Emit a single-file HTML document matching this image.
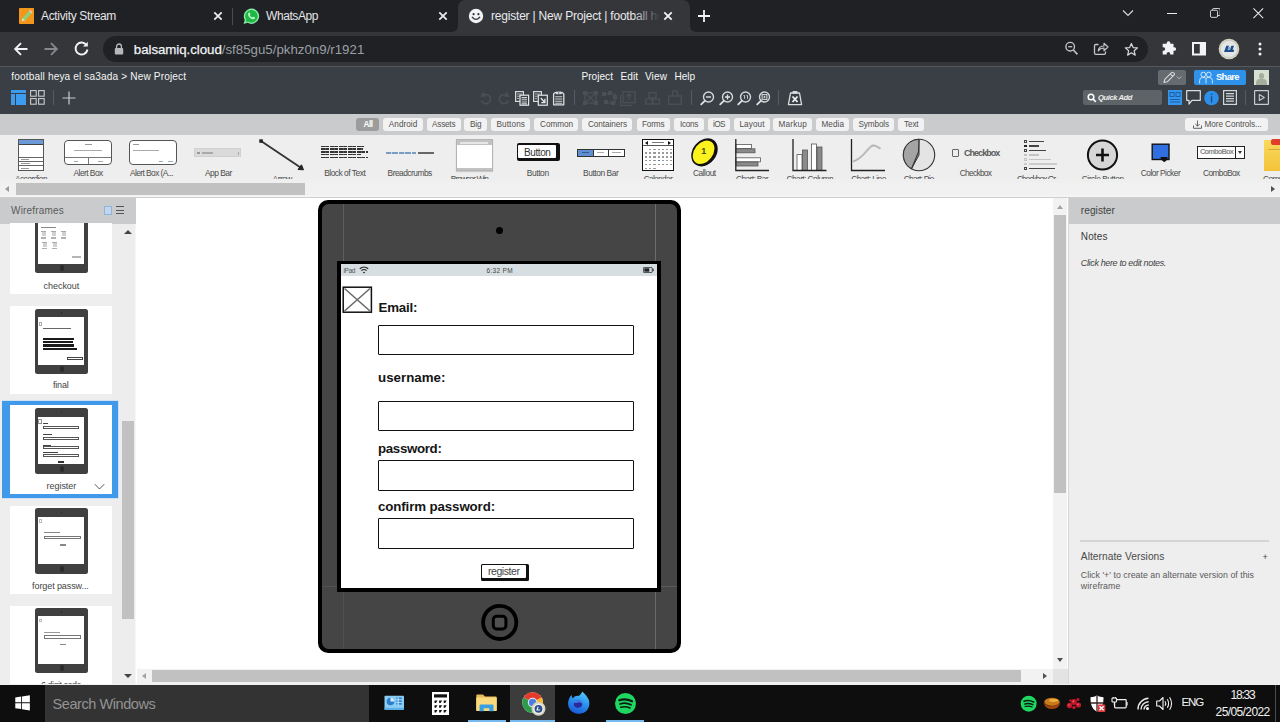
<!DOCTYPE html>
<html>
<head>
<meta charset="utf-8">
<title>register</title>
<style>
*{box-sizing:border-box;margin:0;padding:0}
html,body{width:1280px;height:722px;overflow:hidden;background:#fff;font-family:"Liberation Sans",sans-serif;}
.a{position:absolute}
.t{position:absolute;white-space:nowrap;line-height:1}
#tabbar{left:0;top:0;width:1280px;height:32px;background:#202124}
#addr{left:0;top:32px;width:1280px;height:34px;background:#35363a}
#sep{left:0;top:66px;width:1280px;height:1px;background:#55585c}
#apphdr{left:0;top:67px;width:1280px;height:46.500px;background:#393f44}
#catbar{left:0;top:113.500px;width:1280px;height:21.500px;background:#c9cbcc}
#lib{left:0;top:135px;width:1280px;height:48px;background:#eeeeee}
#libscroll{left:0;top:183px;width:1280px;height:12px;background:#f1f1f1}
#leftp{left:0;top:198px;width:136px;height:487px;background:#eeeeee}
#canvas{left:136px;top:198px;width:932px;height:486px;background:#fff}
#rightp{left:1069px;top:198px;width:211px;height:486px;background:#eeeeee}
#taskbar{left:0;top:684.500px;width:1280px;height:37.500px;background:#0e0e0f}
</style>
</head>
<body>
<!-- CHROME TABBAR -->
<div class="a" id="tabbar"></div>
<!-- tab1 favicon -->
<svg class="a" style="left:19px;top:8px" width="15.300" height="16" viewBox="0 0 16 16" preserveAspectRatio="none"><rect width="16" height="16" rx="1" fill="#f2971c"/><path d="M2.800 13.200 L3.600 10 L10.400 3 L13 5.600 L6.200 12.400 Z" fill="#8fcf78"/><path d="M2.800 13.200 L3.600 10 L6.200 12.400 Z" fill="#f6dcae"/><path d="M10.400 3 L11.600 1.800 L14.200 4.400 L13 5.600 Z" fill="#f5c3b8"/></svg>
<div class="t" style="left:41px;top:10.28px;font-size:12px;color:#e4e5e8;letter-spacing:-0.334px;">Activity Stream</div>
<svg class="a" style="left:213px;top:11px" width="10" height="10" viewBox="0 0 10 10"><path d="M1.3 1.3 L8.7 8.7 M8.7 1.3 L1.3 8.7" stroke="#e8eaed" stroke-width="1.800" fill="none"/></svg>
<div class="a" style="left:232px;top:8px;width:1px;height:17px;background:#4a4c50"></div>
<!-- tab2 whatsapp -->
<svg class="a" style="left:243.300px;top:7.700px" width="16.500" height="16.500" viewBox="0 0 17 17"><path d="M8.600 0.600 a7.900 7.900 0 1 1 -3.900 14.700 L0.600 16.400 L1.800 12.400 A7.900 7.900 0 0 1 8.600 0.600 Z" fill="#86e8a2"/><path d="M8.600 2 a6.500 6.500 0 1 1 -3.500 12 L2.700 14.500 L3.400 12.100 A6.500 6.500 0 0 1 8.600 2 Z" fill="#1fb845"/><path d="M5.900 4.900 c0.500 -0.500 1 -0.300 1.200 0.100 l0.500 1.200 c0.100 0.300 0 0.500 -0.200 0.700 l-0.400 0.500 c0.600 1.100 1.500 1.900 2.600 2.500 l0.600 -0.700 c0.200 -0.200 0.500 -0.300 0.700 -0.200 l1.200 0.600 c0.400 0.200 0.400 0.600 0.200 1 c-0.400 0.800 -1.300 1.200 -2.200 1 c-2.500 -0.600 -4.500 -2.600 -5 -5 c-0.100 -0.700 0.200 -1.300 0.800 -1.700 Z" fill="#b9f5c8"/></svg>
<div class="t" style="left:266px;top:10.28px;font-size:12px;color:#e4e5e8;letter-spacing:-0.420px;">WhatsApp</div>
<svg class="a" style="left:438px;top:11px" width="10" height="10" viewBox="0 0 10 10"><path d="M1.3 1.3 L8.7 8.7 M8.7 1.3 L1.3 8.7" stroke="#e8eaed" stroke-width="1.800" fill="none"/></svg>
<!-- active tab -->
<svg class="a" style="left:450px;top:0px" width="248" height="32" viewBox="0 0 248 32"><path d="M0 32 C6 32 8 30 8 24 L8 8 C8 3 11 0 16 0 L232 0 C237 0 240 3 240 8 L240 24 C240 30 242 32 248 32 Z" fill="#35363a"/></svg>
<svg class="a" style="left:468px;top:8px" width="16" height="16" viewBox="0 0 16 16"><circle cx="8" cy="8" r="7.2" fill="#f1f3f4"/><circle cx="5.6" cy="6.2" r="1.1" fill="#35363a"/><circle cx="10.4" cy="6.2" r="1.1" fill="#35363a"/><path d="M4.3 9.300 Q8 13.400 11.700 9.300" stroke="#35363a" stroke-width="1.300" fill="none" stroke-linecap="round"/></svg>
<div class="a" style="left:491px;top:6px;width:168px;height:20px;overflow:hidden"><div class="t" style="left:0;top:4px;font-size:12px;color:#e8eaed;letter-spacing:-0.2px">register | New Project | football heya</div></div>
<div class="a" style="left:632px;top:6px;width:28px;height:20px;background:linear-gradient(90deg,rgba(53,54,58,0),#35363a)"></div>
<svg class="a" style="left:663px;top:11px" width="10" height="10" viewBox="0 0 10 10"><path d="M1.3 1.3 L8.7 8.7 M8.7 1.3 L1.3 8.7" stroke="#f1f3f4" stroke-width="1.800" fill="none"/></svg>
<svg class="a" style="left:697px;top:9px" width="14" height="14" viewBox="0 0 14 14"><path d="M7 1 V13 M1 7 H13" stroke="#f1f3f4" stroke-width="1.800" fill="none"/></svg>
<!-- window controls -->
<svg class="a" style="left:1122px;top:9px" width="12" height="8" viewBox="0 0 12 8"><path d="M1 1.500 L6 6.500 L11 1.500" stroke="#d5d6d8" stroke-width="1.200" fill="none"/></svg>
<div class="a" style="left:1167px;top:13.300px;width:9.800px;height:1px;background:#e8eaed"></div>
<svg class="a" style="left:1209.700px;top:8px" width="10.700" height="10.700" viewBox="0 0 12 12"><rect x="0.5" y="2.500" width="8" height="8" rx="1.500" stroke="#e8eaed" fill="none"/><path d="M3 2.500 V1.500 a1 1 0 0 1 1 -1 H10 a1.500 1.500 0 0 1 1.500 1.500 V7.500 a1 1 0 0 1 -1 1 H8.500" stroke="#e8eaed" fill="none"/></svg>
<svg class="a" style="left:1253.200px;top:8.200px" width="10.600" height="10.600" viewBox="0 0 12 12"><path d="M0.500 0.500 L11.500 11.500 M11.500 0.500 L0.500 11.500" stroke="#e8eaed" stroke-width="1.200" fill="none"/></svg>
<!-- ADDRESS BAR -->
<div class="a" id="addr"></div>
<svg class="a" style="left:13px;top:41px" width="16" height="16" viewBox="0 0 16 16"><path d="M14.500 8 H2.500 M8 2.200 L2.200 8 L8 13.800" stroke="#f1f3f4" stroke-width="1.900" fill="none"/></svg>
<svg class="a" style="left:43px;top:41px" width="16" height="16" viewBox="0 0 16 16"><path d="M1.500 8 H13.500 M8 2.200 L13.800 8 L8 13.800" stroke="#85888c" stroke-width="1.900" fill="none"/></svg>
<svg class="a" style="left:73px;top:40px" width="17" height="17" viewBox="0 0 17 17"><path d="M13.600 5.200 A6 6 0 1 0 14.500 9.500" stroke="#f1f3f4" stroke-width="1.900" fill="none"/><path d="M14.800 1.800 V6.600 H10 Z" fill="#f1f3f4"/></svg>
<div class="a" style="left:102.500px;top:36px;width:1045px;height:26px;border-radius:13px;background:#202124"></div>
<svg class="a" style="left:114px;top:43px" width="10" height="12" viewBox="0 0 10 12"><rect x="0.800" y="5" width="8.400" height="6.500" rx="1" fill="#b5b7ba"/><path d="M2.600 5.200 V3.400 a2.400 2.400 0 0 1 4.800 0 V5.200" stroke="#b5b7ba" stroke-width="1.300" fill="none"/></svg>
<div class="t" style="left:133.8px;top:42.95px;font-size:13.3px;color:#f1f3f4;letter-spacing:-0.050px;-webkit-text-stroke:0.25px #f1f3f4;">balsamiq.cloud</div><div class="t" style="left:221.8px;top:42.95px;font-size:13.3px;color:#9aa0a6;letter-spacing:-0.009px;">/sf85gu5/pkhz0n9/r1921</div>
<!-- right-side omnibox icons -->
<svg class="a" style="left:1063.500px;top:41px" width="15" height="15" viewBox="0 0 15 15"><circle cx="6.200" cy="5.700" r="4.300" stroke="#bfc2c5" stroke-width="1.400" fill="none"/><path d="M9.400 9 L13.400 13.400" stroke="#bfc2c5" stroke-width="1.600"/><path d="M4.200 5.700 H8.200" stroke="#bfc2c5" stroke-width="1.300"/></svg>
<svg class="a" style="left:1093px;top:41px" width="16" height="15" viewBox="0 0 16 15"><path d="M5.500 3.500 H2.800 a1.300 1.300 0 0 0 -1.300 1.300 V12 a1.300 1.300 0 0 0 1.300 1.300 H11.200 a1.300 1.300 0 0 0 1.300 -1.300 V10.500" stroke="#c4c7ca" stroke-width="1.300" fill="none"/><path d="M5.200 10 C5.500 6.800 8 5 11 5 V2.300 L15 6 L11 9.700 V7 C8.500 7 6.500 8 5.200 10 Z" stroke="#c4c7ca" stroke-width="1.200" fill="none" stroke-linejoin="round"/></svg>
<svg class="a" style="left:1124px;top:41.600px" width="14.800" height="14.800" viewBox="0 0 16 16"><path d="M8 1.600 L9.900 6 L14.600 6.400 L11 9.500 L12.100 14.200 L8 11.700 L3.900 14.200 L5 9.500 L1.400 6.400 L6.100 6 Z" stroke="#d5d7da" stroke-width="1.300" fill="none" stroke-linejoin="round"/></svg>
<svg class="a" style="left:1159.700px;top:40.300px" width="17.300" height="17.300" viewBox="0 0 16 16"><path d="M6.200 2.800 a1.700 1.700 0 0 1 3.400 0 V3.500 H12.500 V6.600 H13.200 a1.700 1.700 0 0 1 0 3.400 H12.500 V13.500 H9.400 V12.800 a1.600 1.600 0 0 0 -3.200 0 V13.500 H2.500 V10 H3.200 a1.600 1.600 0 0 0 0 -3.200 H2.500 V3.500 H6.200 Z" fill="#f1f3f4"/></svg>
<svg class="a" style="left:1192px;top:42px" width="14" height="13.500" viewBox="0 0 14 13.500"><rect x="1" y="1" width="12" height="11.500" stroke="#f1f3f4" stroke-width="2" fill="none"/><rect x="7.800" y="1" width="5.200" height="11.500" fill="#f1f3f4"/></svg>
<svg class="a" style="left:1218.200px;top:37.700px" width="22" height="22" viewBox="0 0 22 22"><circle cx="11" cy="11" r="10.300" fill="#d6d4c0"/><circle cx="11" cy="11" r="8.600" fill="#e3e6e2"/><circle cx="11" cy="11" r="8.600" fill="none" stroke="#b9c0c4" stroke-width="0.600"/><path d="M6 14 L8.300 7.800 H11 L9.600 11.800 H12 L13.400 7.800 H16 L14.600 11.800 H16.300 L15.600 14 Z" fill="#1d4d8c"/><path d="M9.500 10.500 L12.500 8.500 L11.500 11.500 Z" fill="#5d9ad8"/></svg>
<svg class="a" style="left:1257.700px;top:42.200px" width="4" height="14" viewBox="0 0 4 14"><circle cx="2" cy="2" r="1.500" fill="#f1f3f4"/><circle cx="2" cy="7" r="1.500" fill="#f1f3f4"/><circle cx="2" cy="12" r="1.500" fill="#f1f3f4"/></svg>
<div class="a" id="sep"></div>
<!-- APP HEADER -->
<div class="a" id="apphdr"></div>
<div class="t" style="left:11.3px;top:71.74px;font-size:10.1px;color:#f4f4f4;letter-spacing:0.139px;">football heya el sa3ada &gt; New Project</div>
<div class="t" style="left:581.5px;top:71.54px;font-size:10.1px;color:#f6f6f6;letter-spacing:0.011px;">Project</div>
<div class="t" style="left:620.5px;top:71.54px;font-size:10.1px;color:#f6f6f6;letter-spacing:0.023px;">Edit</div>
<div class="t" style="left:645px;top:71.54px;font-size:10.1px;color:#f6f6f6;letter-spacing:0.074px;">View</div>
<div class="t" style="left:674.5px;top:71.54px;font-size:10.1px;color:#f6f6f6;letter-spacing:-0.066px;">Help</div>
<!-- left toolbar -->
<svg class="a" style="left:11px;top:90px" width="15" height="15" viewBox="0 0 15 15"><rect x="0" y="0" width="15" height="3" fill="#3d9cf0"/><rect x="0" y="4" width="4" height="11" fill="#3d9cf0"/><rect x="5" y="4" width="10" height="11" fill="#3d9cf0"/></svg>
<svg class="a" style="left:30px;top:90px" width="15" height="15" viewBox="0 0 15 15"><g stroke="#c9cbcd" stroke-width="1.100" fill="none"><rect x="0.600" y="0.600" width="5.600" height="5.600"/><rect x="8.600" y="0.600" width="5.600" height="5.600"/><rect x="0.600" y="8.600" width="5.600" height="5.600"/><rect x="8.600" y="8.600" width="5.600" height="5.600"/></g></svg>
<div class="a" style="left:53px;top:90px;width:1px;height:15px;background:#565b60"></div>
<svg class="a" style="left:62px;top:91px" width="14" height="14" viewBox="0 0 14 14"><path d="M7 0.500 V13.500 M0.500 7 H13.500" stroke="#c9cbcd" stroke-width="1.200"/></svg>
<!-- center toolbar -->
<svg class="a" style="left:480px;top:91px" width="12" height="14" viewBox="0 0 12 14"><path d="M2.500 5 A4.600 4.600 0 1 1 1.500 9.500" stroke="#4a5056" stroke-width="1.600" fill="none"/><path d="M0.300 5.800 L5.800 5.800 L3.500 0.500 Z" fill="#4a5056"/></svg>
<svg class="a" style="left:498px;top:91px" width="12" height="14" viewBox="0 0 12 14"><path d="M9.500 5 A4.600 4.600 0 1 0 10.500 9.500" stroke="#4a5056" stroke-width="1.600" fill="none"/><path d="M11.700 5.800 L6.200 5.800 L8.500 0.500 Z" fill="#4a5056"/></svg>
<svg class="a" style="left:515px;top:91px" width="15" height="15" viewBox="0 0 15 15"><rect x="0.600" y="0.600" width="7.800" height="9.800" stroke="#d6d8da" stroke-width="1.200" fill="#393f44"/><path d="M1.800 3 H7.200 M1.800 5.200 H7.200 M1.800 7.400 H4" stroke="#aeb1b4" stroke-width="1"/><rect x="5" y="4.200" width="8.600" height="10" stroke="#e6e7e8" stroke-width="1.200" fill="#393f44"/><path d="M6.600 6.600 H12 M6.600 8.800 H12 M6.600 11 H12 M6.600 12.900 H12" stroke="#d4d6d8" stroke-width="1.100"/></svg>
<svg class="a" style="left:533px;top:91px" width="15" height="15" viewBox="0 0 15 15"><rect x="0.600" y="0.600" width="7.800" height="9.800" stroke="#d6d8da" stroke-width="1.200" fill="#393f44"/><path d="M1.800 3 H7.200 M1.800 5.200 H7.200 M1.800 7.400 H4" stroke="#aeb1b4" stroke-width="1"/><rect x="5.300" y="4.200" width="9" height="10" stroke="#e6e7e8" stroke-width="1.200" fill="#393f44"/><path d="M7.800 7 L11.600 11.300 M11.900 7.800 V11.600 H8.300" stroke="#e6e7e8" stroke-width="1.300" fill="none"/></svg>
<svg class="a" style="left:552px;top:91px" width="14" height="15" viewBox="0 0 14 15"><path d="M3 1.600 L1.600 3 V13.800 H11.800 V3 L10.400 1.600 Z" stroke="#dcdddf" stroke-width="1.300" fill="none" stroke-linejoin="round"/><path d="M3.800 0.600 H9.600 V3.200 H3.800 Z" fill="#dcdddf"/><circle cx="6.700" cy="1.900" r="0.700" fill="#393f44"/><path d="M3.200 5.800 H10.200 M3.200 8 H10.200 M3.200 10.200 H10.200 M3.200 12.200 H10.200" stroke="#cfd1d3" stroke-width="1.100"/></svg>
<div class="a" style="left:574px;top:90px;width:1px;height:15px;background:#565b60"></div>
<svg class="a" style="left:583px;top:91px" width="15" height="14" viewBox="0 0 15 14"><g stroke="#4a5056" stroke-width="1.400" fill="none"><rect x="2" y="2" width="11" height="10"/><path d="M2 2 L13 12 M13 2 L2 12"/></g><g fill="#4a5056"><rect x="0" y="0" width="4" height="4"/><rect x="11" y="0" width="4" height="4"/><rect x="0" y="10" width="4" height="4"/><rect x="11" y="10" width="4" height="4"/></g></svg>
<svg class="a" style="left:602px;top:91px" width="15" height="14" viewBox="0 0 15 14"><g fill="#4a5056"><rect x="0" y="1" width="4" height="4"/><rect x="6" y="0" width="4" height="4"/><rect x="11" y="4" width="4" height="4"/><rect x="2" y="9" width="4" height="4"/><rect x="9" y="10" width="4" height="4"/></g><path d="M2 3 H13 V12 H4" stroke="#4a5056" stroke-width="1.200" fill="none"/></svg>
<svg class="a" style="left:620px;top:91px" width="16" height="15" viewBox="0 0 16 15"><g stroke="#4a5056" stroke-width="1.300" fill="none"><rect x="3" y="0.700" width="12" height="11"/><path d="M0.700 4 V14.300 H12"/><path d="M9 3 V9 M6.500 5.500 L9 3 L11.500 5.500"/></g></svg>
<svg class="a" style="left:645px;top:92px" width="15" height="13" viewBox="0 0 15 13"><g stroke="#4a5056" stroke-width="1.300" fill="none"><rect x="4" y="0.700" width="7" height="5"/><rect x="0.700" y="7" width="6.500" height="5"/><rect x="8" y="7" width="6.500" height="5"/></g></svg>
<svg class="a" style="left:668px;top:90px" width="14" height="15" viewBox="0 0 14 15"><g stroke="#4a5056" stroke-width="1.300" fill="none"><path d="M4.500 6 V3 a2.500 2.500 0 0 1 5 0 V6"/><rect x="0.700" y="6" width="12.600" height="8.300"/></g></svg>
<div class="a" style="left:691px;top:90px;width:1px;height:15px;background:#565b60"></div>
<svg class="a" style="left:699px;top:90px" width="16" height="16" viewBox="0 0 16 16"><circle cx="9.500" cy="7" r="5" stroke="#d4d6d8" stroke-width="1.400" fill="none"/><path d="M5.800 10.800 L2.200 14.400" stroke="#e0e1e3" stroke-width="1.800" stroke-linecap="round"/><path d="M7 7 H12" stroke="#e0e1e3" stroke-width="1.400"/></svg>
<svg class="a" style="left:718px;top:90px" width="16" height="16" viewBox="0 0 16 16"><circle cx="9.500" cy="7" r="5" stroke="#d4d6d8" stroke-width="1.400" fill="none"/><path d="M5.800 10.800 L2.200 14.400" stroke="#e0e1e3" stroke-width="1.800" stroke-linecap="round"/><path d="M7 7 H12 M9.500 4.500 V9.500" stroke="#e0e1e3" stroke-width="1.400"/></svg>
<svg class="a" style="left:736px;top:90px" width="16" height="16" viewBox="0 0 16 16"><circle cx="9.500" cy="7" r="5" stroke="#d4d6d8" stroke-width="1.400" fill="none"/><path d="M5.800 10.800 L2.200 14.400" stroke="#e0e1e3" stroke-width="1.800" stroke-linecap="round"/><path d="M7.500 5.500 H8.600 V8.800 M10.500 5.500 H11.500 V8.800" stroke="#c9cbcd" stroke-width="1" fill="none"/></svg>
<svg class="a" style="left:755px;top:90px" width="16" height="16" viewBox="0 0 16 16"><circle cx="9.500" cy="7" r="5" stroke="#d4d6d8" stroke-width="1.400" fill="none"/><path d="M5.800 10.800 L2.200 14.400" stroke="#e0e1e3" stroke-width="1.800" stroke-linecap="round"/><rect x="7.100" y="4.600" width="4.800" height="4.800" stroke="#d4d6d8" stroke-width="1.100" fill="none"/><path d="M9.500 5.800 V8.200 M8.300 7 H10.700" stroke="#d4d6d8" stroke-width="0.900"/></svg>
<div class="a" style="left:778px;top:90px;width:1px;height:15px;background:#565b60"></div>
<svg class="a" style="left:787px;top:90px" width="16" height="16" viewBox="0 0 16 16"><path d="M3.500 3 H12.500 L14.600 14.600 H1.400 Z" stroke="#dcdddf" stroke-width="1.300" fill="none" stroke-linejoin="round"/><path d="M5.500 3.500 V1.800 a0.800 0.800 0 0 1 0.800 -0.800 H9.700 a0.800 0.800 0 0 1 0.800 0.800 V3.500 Z" fill="#dcdddf"/><path d="M5.500 6.500 L10.500 12 M10.500 6.500 L5.500 12" stroke="#f2f2f2" stroke-width="1.800"/></svg>
<!-- right header -->
<div class="a" style="left:1158px;top:70.400px;width:28px;height:14.200px;border-radius:2px;background:#666b6f"></div>
<svg class="a" style="left:1162px;top:71px" width="22" height="13" viewBox="0 0 22 13"><path d="M2 11.500 L2.800 8.300 L9.500 1.600 a1.300 1.300 0 0 1 1.900 0 l0.600 0.600 a1.300 1.300 0 0 1 0 1.900 L5.200 10.800 Z M8.300 2.800 L10.800 5.300" stroke="#d9dadb" stroke-width="1.100" fill="none" stroke-linejoin="round"/><path d="M14.800 5.500 L17 7.800 L19.200 5.500" stroke="#b7babc" stroke-width="1" fill="none"/></svg>
<div class="a" style="left:1194.300px;top:70.400px;width:51.700px;height:14.200px;border-radius:2px;background:#2e91ea"></div>
<svg class="a" style="left:1199px;top:71px" width="14" height="13" viewBox="0 0 14 13"><g stroke="#dcebfa" stroke-width="0.900" fill="none"><circle cx="4.300" cy="3.600" r="2.400"/><circle cx="9.800" cy="3.600" r="2.400"/><path d="M0.600 12.500 V9.500 a3 3 0 0 1 3 -3 h1.400 a3 3 0 0 1 2 1 a3 3 0 0 1 2 -1 h1.400 a3 3 0 0 1 3 3 V12.500"/><path d="M7 7.500 V12.500"/></g></svg>
<div class="t" style="left:1216px;top:71.64px;font-size:9.4px;color:#fff;letter-spacing:-0.672px;font-weight:bold;">Share</div>
<div class="a" style="left:1254px;top:70px;width:14.500px;height:14.500px;background:#d8dfd0;overflow:hidden"><div class="a" style="left:4.500px;top:2.500px;width:5.500px;height:6px;border-radius:3px;background:#a5ad9e"></div><div class="a" style="left:2px;top:8.500px;width:10.500px;height:8px;border-radius:4px 4px 0 0;background:#a5ad9e"></div></div>
<div class="a" style="left:1083px;top:90px;width:79px;height:15px;border-radius:2px;background:#5e6367"></div>
<svg class="a" style="left:1087px;top:93px" width="10" height="10" viewBox="0 0 10 10"><circle cx="4" cy="4" r="2.800" stroke="#fff" stroke-width="1.500" fill="none"/><path d="M6.200 6.200 L8.800 8.800" stroke="#fff" stroke-width="1.700"/></svg>
<div class="t" style="left:1098px;top:93.94px;font-size:7.6px;color:#ececec;letter-spacing:-0.411px;font-weight:bold;font-style:italic;">Quick Add</div>
<svg class="a" style="left:1168px;top:90px" width="14" height="15" viewBox="0 0 14 15"><rect width="14" height="15" fill="#3596ee"/><g stroke="#1d5fa3" stroke-width="1" fill="none"><rect x="2" y="2.500" width="4" height="4"/><rect x="8" y="2.500" width="4" height="4"/><path d="M2 9.500 H12 M2 12 H12"/></g></svg>
<svg class="a" style="left:1186px;top:90px" width="15" height="16" viewBox="0 0 15 16"><path d="M0.700 0.700 H14.300 V10.300 H6 L3 14 V10.300 H0.700 Z" stroke="#dcdddf" stroke-width="1.200" fill="none" stroke-linejoin="round"/></svg>
<svg class="a" style="left:1204px;top:90px" width="15" height="16" viewBox="0 0 15 16"><circle cx="7.500" cy="8" r="7.300" fill="#2e8fe8"/><rect x="6.900" y="6.200" width="1.300" height="6.300" fill="#1b4e86"/><rect x="6.900" y="3.500" width="1.300" height="1.500" fill="#1b4e86"/></svg>
<svg class="a" style="left:1223px;top:90px" width="14" height="15" viewBox="0 0 14 15"><rect x="0.600" y="0.600" width="12.800" height="13.800" stroke="#d4d6d8" stroke-width="1.200" fill="none"/><path d="M3 3.700 H11 M3 6.200 H11 M3 8.700 H11 M3 11.200 H11" stroke="#d4d6d8" stroke-width="1.200"/></svg>
<div class="a" style="left:1245px;top:90px;width:1px;height:15px;background:#565b60"></div>
<svg class="a" style="left:1254px;top:90px" width="15" height="15" viewBox="0 0 15 15"><rect x="0.600" y="0.600" width="13.800" height="13.800" rx="0.500" stroke="#c9cbcd" stroke-width="1.200" fill="none"/><path d="M5.300 4.500 L10.300 7.500 L5.300 10.500 Z" stroke="#c9cbcd" stroke-width="1.100" fill="none" stroke-linejoin="round"/></svg>
<!-- CATEGORY BAR -->
<div class="a" id="catbar"></div>
<div class="a" style="left:356px;top:118px;width:23px;height:12.5px;border-radius:3px;background:#9c9c9c"></div>
<div class="t" style="left:363.5px;top:120.81px;font-size:8.2px;color:#fff;letter-spacing:-0.490px;font-weight:bold;">All</div>
<div class="a" style="left:383px;top:118px;width:40px;height:12.5px;border-radius:3px;background:#f2f2f2"></div>
<div class="t" style="left:388.8px;top:120.81px;font-size:8.2px;color:#505050;letter-spacing:0.038px;">Android</div>
<div class="a" style="left:427px;top:118px;width:34px;height:12.5px;border-radius:3px;background:#f2f2f2"></div>
<div class="t" style="left:432px;top:120.81px;font-size:8.2px;color:#505050;letter-spacing:-0.213px;">Assets</div>
<div class="a" style="left:464px;top:118px;width:23px;height:12.5px;border-radius:3px;background:#f2f2f2"></div>
<div class="t" style="left:470px;top:120.81px;font-size:8.2px;color:#505050;letter-spacing:-0.115px;">Big</div>
<div class="a" style="left:491px;top:118px;width:39px;height:12.5px;border-radius:3px;background:#f2f2f2"></div>
<div class="t" style="left:496.5px;top:120.81px;font-size:8.2px;color:#505050;letter-spacing:0.105px;">Buttons</div>
<div class="a" style="left:534px;top:118px;width:44px;height:12.5px;border-radius:3px;background:#f2f2f2"></div>
<div class="t" style="left:540px;top:120.81px;font-size:8.2px;color:#505050;letter-spacing:-0.036px;">Common</div>
<div class="a" style="left:582px;top:118px;width:50px;height:12.5px;border-radius:3px;background:#f2f2f2"></div>
<div class="t" style="left:588px;top:120.81px;font-size:8.2px;color:#505050;letter-spacing:-0.061px;">Containers</div>
<div class="a" style="left:636.5px;top:118px;width:33.5px;height:12.5px;border-radius:3px;background:#f2f2f2"></div>
<div class="t" style="left:642px;top:120.81px;font-size:8.2px;color:#505050;letter-spacing:-0.141px;">Forms</div>
<div class="a" style="left:674px;top:118px;width:29.5px;height:12.5px;border-radius:3px;background:#f2f2f2"></div>
<div class="t" style="left:680px;top:120.81px;font-size:8.2px;color:#505050;letter-spacing:-0.316px;">Icons</div>
<div class="a" style="left:707.5px;top:118px;width:22.5px;height:12.5px;border-radius:3px;background:#f2f2f2"></div>
<div class="t" style="left:713px;top:120.81px;font-size:8.2px;color:#505050;letter-spacing:-0.552px;">iOS</div>
<div class="a" style="left:734px;top:118px;width:35.5px;height:12.5px;border-radius:3px;background:#f2f2f2"></div>
<div class="t" style="left:739.5px;top:120.81px;font-size:8.2px;color:#505050;letter-spacing:0.068px;">Layout</div>
<div class="a" style="left:773px;top:118px;width:39px;height:12.5px;border-radius:3px;background:#f2f2f2"></div>
<div class="t" style="left:778.5px;top:120.81px;font-size:8.2px;color:#505050;letter-spacing:0.198px;">Markup</div>
<div class="a" style="left:816px;top:118px;width:33px;height:12.5px;border-radius:3px;background:#f2f2f2"></div>
<div class="t" style="left:821.5px;top:120.81px;font-size:8.2px;color:#505050;letter-spacing:0.037px;">Media</div>
<div class="a" style="left:853px;top:118px;width:41px;height:12.5px;border-radius:3px;background:#f2f2f2"></div>
<div class="t" style="left:858.5px;top:120.81px;font-size:8.2px;color:#505050;letter-spacing:-0.129px;">Symbols</div>
<div class="a" style="left:898px;top:118px;width:26px;height:12.5px;border-radius:3px;background:#f2f2f2"></div>
<div class="t" style="left:904px;top:120.81px;font-size:8.2px;color:#505050;letter-spacing:-0.129px;">Text</div>
<div class="a" style="left:1185px;top:118px;width:83px;height:12.5px;border-radius:3px;background:#f2f2f2"></div>
<svg class="a" style="left:1193px;top:120px" width="9" height="9" viewBox="0 0 9 9"><path d="M0.500 5.500 V8.300 H8.500 V5.500 M4.500 0.500 V6 M2.300 4 L4.500 6.200 L6.700 4" stroke="#555" stroke-width="0.900" fill="none"/></svg>
<div class="t" style="left:1204.5px;top:120.81px;font-size:8.2px;color:#505050;letter-spacing:-0.066px;">More Controls...</div>
<!-- LIBRARY -->
<div class="a" id="lib"></div>
<div class="a" style="left:18px;top:139px;width:25.500px;height:32px;border:1px solid #555;background:#fff"><div class="a" style="left:0;top:0;width:23.500px;height:4.500px;background:#6a9bd8;border-bottom:1px solid #444"></div><div class="a" style="left:0;top:17px;width:23.500px;height:1px;background:#666"></div><div class="a" style="left:0;top:21px;width:23.500px;height:1px;background:#666"></div><div class="a" style="left:0;top:25px;width:23.500px;height:1px;background:#666"></div><div class="a" style="left:1.500px;top:19px;width:8px;height:1px;background:#999"></div><div class="a" style="left:1.500px;top:23px;width:9px;height:1px;background:#999"></div><div class="a" style="left:1.500px;top:27.500px;width:8px;height:1px;background:#999"></div></div>
<div class="t" style="left:15px;top:174.50px;font-size:8.4px;color:#4c4c4c;letter-spacing:-0.583px;">Accordion</div>
<div class="a" style="left:64px;top:140px;width:47.500px;height:24.500px;border:1px solid #555;border-radius:4px;background:#fff"><div class="a" style="left:20px;top:2.500px;width:7px;height:1px;background:#999"></div><div class="a" style="left:9px;top:8.500px;width:28px;height:1.500px;background:#aaa"></div><div class="a" style="left:0;top:16px;width:45.500px;height:1px;background:#777"></div><div class="a" style="left:22.500px;top:16px;width:1px;height:6.500px;background:#777"></div><div class="a" style="left:9px;top:19.500px;width:4px;height:1px;background:#aaa"></div><div class="a" style="left:33px;top:19.500px;width:5px;height:1px;background:#aaa"></div></div>
<div class="t" style="left:73.5px;top:169.00px;font-size:8.4px;color:#4c4c4c;letter-spacing:-0.532px;">Alert Box</div>
<div class="a" style="left:129px;top:140px;width:47.500px;height:24.500px;border:1px solid #555;border-radius:4px;background:#fff"><div class="a" style="left:3px;top:2.500px;width:6px;height:1px;background:#999"></div><div class="a" style="left:3px;top:8.500px;width:26px;height:1.500px;background:#aaa"></div><div class="a" style="left:29px;top:20px;width:4px;height:1px;background:#9ab"></div><div class="a" style="left:38px;top:20px;width:5px;height:1px;background:#9ab"></div></div>
<div class="t" style="left:130px;top:169.00px;font-size:8.4px;color:#4c4c4c;letter-spacing:-0.578px;">Alert Box (A...</div>
<div class="a" style="left:194px;top:148px;width:47px;height:9px;border:1px solid #d0d0d0;background:#dadada"><div class="a" style="left:2px;top:3px;width:2.500px;height:1.500px;background:#999"></div><div class="a" style="left:7px;top:3px;width:11px;height:1.500px;background:#aaa"></div><div class="a" style="left:43px;top:2.500px;width:1px;height:3px;background:#aaa"></div></div>
<div class="t" style="left:205px;top:169.00px;font-size:8.4px;color:#4c4c4c;letter-spacing:-0.495px;">App Bar</div>
<svg class="a" style="left:258px;top:138px" width="48" height="34" viewBox="0 0 48 34"><path d="M3 3 L44 30.500" stroke="#333" stroke-width="1.800"/><rect x="1.300" y="1.300" width="3.500" height="3.500" fill="#222"/><path d="M45.500 31.800 L40 31.500 L43.500 26.800 Z" fill="#222" stroke="#222" stroke-width="1"/></svg>
<div class="t" style="left:272.6px;top:174.50px;font-size:8.4px;color:#4c4c4c;letter-spacing:-0.515px;">Arrow</div>
<div class="a" style="left:321px;top:145.500px;width:48px;height:14px"><div class="a" style="left:0;top:0.0px;width:43px;height:1.600px;background:repeating-linear-gradient(90deg,#333 0 4px,#555 4px 5px,#333 5px 8px,#eee 8px 9px)"></div><div class="a" style="left:0;top:2.8px;width:42px;height:1.600px;background:repeating-linear-gradient(90deg,#333 0 4px,#555 4px 5px,#333 5px 8px,#eee 8px 9px)"></div><div class="a" style="left:0;top:5.6px;width:47px;height:1.600px;background:repeating-linear-gradient(90deg,#333 0 4px,#555 4px 5px,#333 5px 8px,#eee 8px 9px)"></div><div class="a" style="left:0;top:8.4px;width:40px;height:1.600px;background:repeating-linear-gradient(90deg,#333 0 4px,#555 4px 5px,#333 5px 8px,#eee 8px 9px)"></div><div class="a" style="left:0;top:11.2px;width:47px;height:1.600px;background:repeating-linear-gradient(90deg,#333 0 4px,#555 4px 5px,#333 5px 8px,#eee 8px 9px)"></div></div>
<div class="t" style="left:324.2px;top:169.00px;font-size:8.4px;color:#4c4c4c;letter-spacing:-0.479px;">Block of Text</div>
<div class="a" style="left:386px;top:151.500px;width:30px;height:2.500px;background:repeating-linear-gradient(90deg,#7b9cc4 0 5px,#c8d4e2 5px 6px,#7b9cc4 6px 12px,#eee 12px 13px)"></div><div class="a" style="left:418px;top:151.500px;width:16px;height:2.500px;background:#666"></div>
<div class="t" style="left:387.6px;top:169.00px;font-size:8.4px;color:#4c4c4c;letter-spacing:-0.519px;">Breadcrumbs</div>
<div class="a" style="left:455.500px;top:139px;width:37.500px;height:32px;border:1px solid #b4b4b4;background:#fff;box-shadow:0 1px 1px rgba(0,0,0,0.15)"><div class="a" style="left:0;top:0;width:35.500px;height:5px;background:#c2c2c2"></div><div class="a" style="left:3px;top:1.500px;width:28px;height:2px;background:#e6e6e6"></div><div class="a" style="left:0;top:28px;width:35.500px;height:2px;background:#c2c2c2"></div></div>
<div class="t" style="left:450.7px;top:174.50px;font-size:8.4px;color:#4c4c4c;letter-spacing:-0.918px;">Browser Win...</div>
<div class="a" style="left:516.500px;top:143px;width:43.500px;height:18.300px;background:#111;border-radius:2px"></div><div class="a" style="left:518.300px;top:145px;width:38px;height:12.500px;background:#fff;border-radius:1px"></div>
<div class="t" style="left:524px;top:147.60px;font-size:10px;color:#333;letter-spacing:-0.404px;">Button</div>
<div class="t" style="left:526.7px;top:169.00px;font-size:8.4px;color:#4c4c4c;letter-spacing:-0.370px;">Button</div>
<div class="a" style="left:577px;top:148.500px;width:48px;height:8px;border:1px solid #333;border-bottom-width:1.500px;background:#fff"><div class="a" style="left:0;top:0;width:14.500px;height:6px;background:#5e8fd0"></div><div class="a" style="left:14.500px;top:0;width:1px;height:6px;background:#333"></div><div class="a" style="left:29.500px;top:0;width:1px;height:6px;background:#333"></div><div class="a" style="left:4px;top:2.500px;width:7px;height:1px;background:#36598c"></div><div class="a" style="left:19px;top:2.500px;width:7px;height:1px;background:#aaa"></div><div class="a" style="left:34px;top:2.500px;width:9px;height:1px;background:#aaa"></div></div>
<div class="t" style="left:583px;top:169.00px;font-size:8.4px;color:#4c4c4c;letter-spacing:-0.418px;">Button Bar</div>
<div class="a" style="left:642px;top:139px;width:32px;height:32px;border:1.200px solid #111;background:#fff"><div class="a" style="left:0;top:5px;width:30px;height:1px;background:#555"></div><div class="a" style="left:9px;top:1.500px;width:12px;height:1.500px;background:#777"></div><div class="a" style="left:2px;top:0.500px;width:0;height:0;border:2px solid transparent;border-right:3px solid #111;border-left:0"></div><div class="a" style="left:25px;top:0.500px;width:0;height:0;border:2px solid transparent;border-left:3px solid #111;border-right:0"></div><div class="a" style="left:6.2px;top:8.5px;width:2.200px;height:1.500px;background:#999"></div><div class="a" style="left:10.4px;top:8.5px;width:2.200px;height:1.500px;background:#999"></div><div class="a" style="left:14.6px;top:8.5px;width:2.200px;height:1.500px;background:#999"></div><div class="a" style="left:18.8px;top:8.5px;width:2.200px;height:1.500px;background:#999"></div><div class="a" style="left:23.0px;top:8.5px;width:2.200px;height:1.500px;background:#999"></div><div class="a" style="left:27.2px;top:8.5px;width:2.200px;height:1.500px;background:#999"></div><div class="a" style="left:2.0px;top:12.3px;width:2.200px;height:1.500px;background:#999"></div><div class="a" style="left:6.2px;top:12.3px;width:2.200px;height:1.500px;background:#999"></div><div class="a" style="left:10.4px;top:12.3px;width:2.200px;height:1.500px;background:#999"></div><div class="a" style="left:14.6px;top:12.3px;width:2.200px;height:1.500px;background:#999"></div><div class="a" style="left:18.8px;top:12.3px;width:2.200px;height:1.500px;background:#999"></div><div class="a" style="left:23.0px;top:12.3px;width:2.200px;height:1.500px;background:#999"></div><div class="a" style="left:27.2px;top:12.3px;width:2.200px;height:1.500px;background:#999"></div><div class="a" style="left:2.0px;top:16.1px;width:2.200px;height:1.500px;background:#999"></div><div class="a" style="left:6.2px;top:16.1px;width:2.200px;height:1.500px;background:#999"></div><div class="a" style="left:10.4px;top:16.1px;width:2.200px;height:1.500px;background:#999"></div><div class="a" style="left:14.6px;top:16.1px;width:2.200px;height:1.500px;background:#999"></div><div class="a" style="left:18.8px;top:16.1px;width:2.200px;height:1.500px;background:#999"></div><div class="a" style="left:23.0px;top:16.1px;width:2.200px;height:1.500px;background:#999"></div><div class="a" style="left:27.2px;top:16.1px;width:2.200px;height:1.500px;background:#999"></div><div class="a" style="left:2.0px;top:19.9px;width:2.200px;height:1.500px;background:#999"></div><div class="a" style="left:6.2px;top:19.9px;width:2.200px;height:1.500px;background:#999"></div><div class="a" style="left:10.4px;top:19.9px;width:2.200px;height:1.500px;background:#999"></div><div class="a" style="left:14.6px;top:19.9px;width:2.200px;height:1.500px;background:#4f78c0"></div><div class="a" style="left:18.8px;top:19.9px;width:2.200px;height:1.500px;background:#999"></div><div class="a" style="left:23.0px;top:19.9px;width:2.200px;height:1.500px;background:#999"></div><div class="a" style="left:27.2px;top:19.9px;width:2.200px;height:1.500px;background:#999"></div><div class="a" style="left:2.0px;top:23.7px;width:2.200px;height:1.500px;background:#999"></div><div class="a" style="left:6.2px;top:23.7px;width:2.200px;height:1.500px;background:#999"></div><div class="a" style="left:10.4px;top:23.7px;width:2.200px;height:1.500px;background:#999"></div><div class="a" style="left:14.6px;top:23.7px;width:2.200px;height:1.500px;background:#999"></div><div class="a" style="left:18.8px;top:23.7px;width:2.200px;height:1.500px;background:#999"></div><div class="a" style="left:23.0px;top:23.7px;width:2.200px;height:1.500px;background:#999"></div><div class="a" style="left:27.2px;top:23.7px;width:2.200px;height:1.500px;background:#999"></div><div class="a" style="left:2.0px;top:27.5px;width:2.200px;height:1.500px;background:#999"></div><div class="a" style="left:6.2px;top:27.5px;width:2.200px;height:1.500px;background:#999"></div><div class="a" style="left:10.4px;top:27.5px;width:2.200px;height:1.500px;background:#999"></div></div>
<div class="t" style="left:643.7px;top:174.50px;font-size:8.4px;color:#4c4c4c;letter-spacing:-0.713px;">Calendar</div>
<svg class="a" style="left:689px;top:137px" width="32" height="31" viewBox="0 0 32 31"><ellipse cx="15.500" cy="15.300" rx="15.300" ry="11.800" fill="#111" transform="rotate(-52 15.500 15.300)"/><ellipse cx="14.600" cy="15.200" rx="13" ry="9.300" fill="#fbf21e" transform="rotate(-52 14.600 15.200)"/></svg>
<div class="t" style="left:701.2px;top:147.16px;font-size:9px;color:#4a4a10;letter-spacing:0.000px;font-weight:bold;">1</div>
<div class="t" style="left:693px;top:169.40px;font-size:8.4px;color:#4c4c4c;letter-spacing:-0.483px;">Callout</div>
<svg class="a" style="left:734px;top:138px" width="37" height="34" viewBox="0 0 37 34"><g stroke="#555" stroke-width="0.800"><rect x="2" y="6.500" width="15.500" height="4" fill="#fff"/><rect x="2" y="10.800" width="19" height="4" fill="#8a8a8a"/><rect x="2" y="19.800" width="24.500" height="4" fill="#fff"/><rect x="2" y="24" width="22" height="4" fill="#8a8a8a"/></g><path d="M1.800 1 V32.500 H35" stroke="#222" stroke-width="1.300" fill="none"/></svg>
<div class="t" style="left:736px;top:174.50px;font-size:8.4px;color:#4c4c4c;letter-spacing:-0.617px;">Chart: Bar</div>
<svg class="a" style="left:791px;top:138px" width="37" height="34" viewBox="0 0 37 34"><g stroke="#555" stroke-width="0.800"><rect x="6" y="16.600" width="5" height="16" fill="#fff"/><rect x="11.500" y="12" width="5" height="20.500" fill="#8a8a8a"/><rect x="20.500" y="6" width="5" height="26.500" fill="#fff"/><rect x="26" y="9" width="5" height="23.500" fill="#8a8a8a"/></g><path d="M2 1 V32.500 H35.500" stroke="#222" stroke-width="1.300" fill="none"/></svg>
<div class="t" style="left:786.5px;top:174.50px;font-size:8.4px;color:#4c4c4c;letter-spacing:-0.577px;">Chart: Column</div>
<svg class="a" style="left:850px;top:138px" width="37" height="34" viewBox="0 0 37 34"><path d="M3 23.500 C8 22 11 19 14 16 S20 8 23 7.500 S28 10 30.500 10.500" stroke="#bdbdbd" stroke-width="2.400" fill="none" opacity="0.700"/><path d="M3 23.500 C8 22 11 19 14 16 S20 8 23 7.500 S28 10 30.500 10.500" stroke="#a8a8a8" stroke-width="0.900" fill="none"/><path d="M1.500 1 V32.500 H35" stroke="#222" stroke-width="1.300" fill="none"/></svg>
<div class="t" style="left:851.3px;top:174.50px;font-size:8.4px;color:#4c4c4c;letter-spacing:-0.597px;">Chart: Line</div>
<svg class="a" style="left:902px;top:138px" width="34" height="34" viewBox="0 0 34 34"><circle cx="17" cy="17" r="15.700" fill="#e4e4e4" stroke="#333" stroke-width="1.100"/><path d="M17 17 L17 1.300 A15.700 15.700 0 0 0 9.500 30.800 Z" fill="#a4a4a4" stroke="#333" stroke-width="1" stroke-linejoin="round"/><path d="M17 1.300 L16.500 14 L9.500 30.800" stroke="#333" stroke-width="1.100" fill="#a4a4a4"/></svg>
<div class="t" style="left:903.7px;top:174.50px;font-size:8.4px;color:#4c4c4c;letter-spacing:-0.715px;">Chart: Pie</div>
<div class="a" style="left:951.500px;top:148.500px;width:7px;height:8.500px;border:1px solid #666;border-radius:1px"></div>
<div class="t" style="left:964px;top:148.76px;font-size:9px;color:#5a5a5a;letter-spacing:-0.964px;font-weight:bold;">Checkbox</div>
<div class="t" style="left:959.8px;top:169.00px;font-size:8.4px;color:#4c4c4c;letter-spacing:-0.731px;">Checkbox</div>
<div class="a" style="left:1024px;top:139.500px;width:34px;height:32px"><div class="a" style="left:0;top:0.5px;width:2.500px;height:2.500px;border:0.700px solid #444;"></div><div class="a" style="left:4.500px;top:1.0px;width:15px;height:1.500px;background:#444"></div><div class="a" style="left:0;top:5.0px;width:2.500px;height:2.500px;border:0.700px solid #222;background:#333"></div><div class="a" style="left:4.500px;top:5.5px;width:10px;height:1.500px;background:#444"></div><div class="a" style="left:0;top:9.5px;width:2.500px;height:2.500px;border:0.700px solid #444;"></div><div class="a" style="left:4.500px;top:10.0px;width:17px;height:1.500px;background:#444"></div><div class="a" style="left:0;top:14.0px;width:2.500px;height:2.500px;border:0.700px solid #c4c4c4;"></div><div class="a" style="left:4.500px;top:14.5px;width:10px;height:1.500px;background:#c4c4c4"></div><div class="a" style="left:0;top:18.5px;width:2.500px;height:2.500px;border:0.700px solid #c4c4c4;"></div><div class="a" style="left:4.500px;top:19.0px;width:22px;height:1.500px;background:#c4c4c4"></div><div class="a" style="left:0;top:23.0px;width:2.500px;height:2.500px;border:0.700px solid #ccc;"></div><div class="a" style="left:4.500px;top:23.5px;width:28px;height:1.500px;background:#ccc"></div><div class="a" style="left:0;top:27.5px;width:2.500px;height:2.500px;border:0.700px solid #444;"></div><div class="a" style="left:4.500px;top:28.0px;width:26px;height:1.500px;background:#444"></div></div>
<div class="t" style="left:1017px;top:174.50px;font-size:8.4px;color:#4c4c4c;letter-spacing:-0.985px;">Checkbox Gr...</div>
<svg class="a" style="left:1086px;top:138px" width="34" height="34" viewBox="0 0 34 34"><circle cx="16.500" cy="17" r="14.600" fill="#d6d6d6" stroke="#111" stroke-width="2"/><path d="M16.500 10.500 V23.500 M10 17 H23" stroke="#111" stroke-width="2.600"/></svg>
<div class="t" style="left:1081.8px;top:174.50px;font-size:8.4px;color:#4c4c4c;letter-spacing:-0.473px;">Circle Button</div>
<svg class="a" style="left:1151px;top:143px" width="20" height="20" viewBox="0 0 20 20"><rect x="1.200" y="1.200" width="16.800" height="15.300" fill="#2f6fe0" stroke="#111" stroke-width="1.400"/><path d="M9.500 14 H16.500 V16.500 L13.300 19.300 L10 16.500 Z" fill="#111"/></svg>
<div class="t" style="left:1140.8px;top:169.00px;font-size:8.4px;color:#4c4c4c;letter-spacing:-0.517px;">Color Picker</div>
<div class="a" style="left:1197px;top:145.500px;width:48px;height:13.500px;border:1.200px solid #222;background:#fff"><div class="a" style="left:37px;top:0;width:1.200px;height:11px;background:#222"></div><div class="a" style="left:40px;top:4px;width:0;height:0;border:2.500px solid transparent;border-top:3px solid #333;border-bottom:0"></div></div>
<div class="t" style="left:1200px;top:148.10px;font-size:7.5px;color:#8a8a8a;letter-spacing:-0.875px;font-weight:bold;">ComboBox</div>
<div class="t" style="left:1203px;top:169.00px;font-size:8.4px;color:#4c4c4c;letter-spacing:-0.605px;">ComboBox</div>
<div class="a" style="left:1264px;top:140px;width:20px;height:30.500px;background:linear-gradient(180deg,#f9d95c,#f3c33a)"></div><div class="a" style="left:1271px;top:139px;width:12px;height:6px;border-radius:2px;background:#e0402a"></div><div class="a" style="left:1268px;top:149px;width:12px;height:1px;background:#d9a83a"></div>
<div class="t" style="left:1263px;top:174.50px;font-size:8.4px;color:#4c4c4c;letter-spacing:-0.616px;">Comment</div>
<div class="a" style="left:0;top:178.500px;width:1280px;height:5px;background:#efefef"></div>
<div class="a" id="libscroll"></div>
<div class="a" style="left:16px;top:183.400px;width:289px;height:11.700px;background:#c1c1c1"></div>
<div class="a" style="left:5px;top:186px;width:0;height:0;border:3px solid transparent;border-right:4px solid #9a9a9a;border-left:0"></div>
<div class="a" style="left:1271px;top:186px;width:0;height:0;border:3px solid transparent;border-left:4px solid #505050;border-right:0"></div>
<div class="a" style="left:0;top:195px;width:1280px;height:2px;background:#f4f4f4"></div>
<div class="a" style="left:0;top:197px;width:1280px;height:1px;background:#cfcfcf"></div>
<!-- LEFT PANEL -->
<div class="a" id="leftp"></div>
<div class="a" style="left:0;top:198px;width:136.200px;height:25.700px;background:#c9cbcc"></div>
<div class="t" style="left:11px;top:206.40px;font-size:10px;color:#5c5c5c;letter-spacing:0.188px;">Wireframes</div>
<div class="a" style="left:104px;top:205.500px;width:7.500px;height:9.500px;border:1px solid #8db5de;background:#c3d6ea"></div>
<div class="a" style="left:116px;top:206px;width:8px;height:1.300px;background:#555"></div><div class="a" style="left:116px;top:209.500px;width:8px;height:1.300px;background:#555"></div><div class="a" style="left:116px;top:213px;width:8px;height:1.300px;background:#555"></div>
<div class="a" style="left:112px;top:223.700px;width:23.500px;height:461px;background:#ededed"></div>
<div class="a" style="left:135.300px;top:223.700px;width:1px;height:461px;background:#f6f6f6"></div>
<div class="a" style="left:121.500px;top:420.500px;width:12.500px;height:198px;background:#c1c1c1"></div>
<div class="a" style="left:123.500px;top:230px;width:0;height:0;border:4px solid transparent;border-bottom:4.500px solid #444;border-top:0"></div>
<div class="a" style="left:123.500px;top:673.500px;width:0;height:0;border:4px solid transparent;border-top:4.500px solid #444;border-bottom:0"></div>
<div class="a" style="left:10px;top:223px;width:102px;height:71px;background:#fff"></div>
<div class="a" style="left:0;top:223px;width:119px;height:62px;overflow:hidden"><div class="a" style="left:0;top:-223px"><div class="a" style="left:35px;top:207.5px;width:52.800px;height:65.5px;border-radius:2.500px;background:#404040"><div class="a" style="left:3.200px;top:8.600px;width:45.900px;height:47.600px;background:#fff;overflow:hidden"><div class="a" style="left:0;top:9.500px"><div class="a" style="left:3px;top:1.2px;width:15px;height:0.9px;background:#888"></div><div class="a" style="left:3px;top:5.6px;width:5px;height:1px;background:#aaa"></div><div class="a" style="left:3.5px;top:6.6px;width:4px;height:4.2px;background:#d0d0d0"></div><div class="a" style="left:3px;top:11.399999999999999px;width:5px;height:1.6px;background:#b0b0b0"></div><div class="a" style="left:13px;top:5.6px;width:5px;height:1px;background:#aaa"></div><div class="a" style="left:13.5px;top:6.6px;width:4px;height:4.2px;background:#d0d0d0"></div><div class="a" style="left:13px;top:11.399999999999999px;width:5px;height:1.6px;background:#b0b0b0"></div><div class="a" style="left:23px;top:5.6px;width:5px;height:1px;background:#aaa"></div><div class="a" style="left:23.5px;top:6.6px;width:4px;height:4.2px;background:#d0d0d0"></div><div class="a" style="left:23px;top:11.399999999999999px;width:5px;height:1.6px;background:#b0b0b0"></div><div class="a" style="left:4px;top:16.2px;width:5px;height:1px;background:#aaa"></div><div class="a" style="left:4.5px;top:17.2px;width:4px;height:4.2px;background:#d0d0d0"></div><div class="a" style="left:4px;top:22.0px;width:5px;height:1.6px;background:#b0b0b0"></div><div class="a" style="left:14px;top:16.2px;width:5px;height:1px;background:#aaa"></div><div class="a" style="left:14.5px;top:17.2px;width:4px;height:4.2px;background:#d0d0d0"></div><div class="a" style="left:14px;top:22.0px;width:5px;height:1.6px;background:#b0b0b0"></div><div class="a" style="left:34px;top:30.6px;width:8.5px;height:2px;background:#b5b5b5"></div></div></div><div class="a" style="left:24.500px;top:57.500px;width:4.500px;height:6px;border-radius:2px;background:#2a2a2a"></div><div class="a" style="left:25.500px;top:3.500px;width:1.500px;height:1.500px;border-radius:1px;background:#222"></div></div></div></div>
<div class="t" style="left:43.6px;top:282.16px;font-size:9px;color:#444;letter-spacing:-0.054px;">checkout</div>
<div class="a" style="left:10px;top:305.500px;width:102px;height:88px;background:#fff"></div>
<div class="a" style="left:35px;top:308.5px;width:52.800px;height:65.5px;border-radius:2.500px;background:#404040"><div class="a" style="left:3.200px;top:8.600px;width:45.900px;height:47.600px;background:#fff;overflow:hidden"><div class="a" style="left:0.5px;top:5.3px;width:3.5px;height:3.5px;border:0.800px solid #aaa"></div><div class="a" style="left:4.5px;top:10.8px;width:28px;height:0.9px;background:#666"></div><div class="a" style="left:5px;top:21.2px;width:31px;height:2.1px;background:#1a1a1a"></div><div class="a" style="left:5px;top:24.3px;width:30px;height:2.1px;background:#1a1a1a"></div><div class="a" style="left:5px;top:27.4px;width:31px;height:2.1px;background:#1a1a1a"></div><div class="a" style="left:5px;top:30.5px;width:34px;height:2.1px;background:#1a1a1a"></div><div class="a" style="left:28.5px;top:39.6px;width:16.5px;height:3.4px;border:0.700px solid #444"></div></div><div class="a" style="left:24.500px;top:57.500px;width:4.500px;height:6px;border-radius:2px;background:#2a2a2a"></div><div class="a" style="left:25.500px;top:3.500px;width:1.500px;height:1.500px;border-radius:1px;background:#222"></div></div>
<div class="t" style="left:53px;top:380.66px;font-size:9px;color:#444;letter-spacing:-0.203px;">final</div>
<div class="a" style="left:1.500px;top:400.300px;width:117.500px;height:98.400px;background:#cfe2f5"></div>
<div class="a" style="left:2.300px;top:401.200px;width:115.700px;height:96.600px;background:#4199ea"></div>
<div class="a" style="left:10px;top:405px;width:102px;height:89px;background:#fff"></div>
<div class="a" style="left:35px;top:408px;width:52.800px;height:65.5px;border-radius:2.500px;background:#404040"><div class="a" style="left:3.200px;top:8.600px;width:45.900px;height:47.600px;background:#fff;overflow:hidden"><div class="a" style="left:0.3px;top:2.8px;width:3.4px;height:4.2px;border:0.7px solid #999"></div><div class="a" style="left:1px;top:6.4px;width:3px;height:0.8px;background:#888"></div><div class="a" style="left:4.8px;top:6.9px;width:5.5px;height:1px;background:#444"></div><div class="a" style="left:5px;top:9.7px;width:36px;height:3px;border:0.700px solid #555"></div><div class="a" style="left:4.8px;top:17.4px;width:9.5px;height:1px;background:#444"></div><div class="a" style="left:5px;top:20.8px;width:36px;height:3px;border:0.700px solid #555"></div><div class="a" style="left:4.8px;top:28px;width:8px;height:1px;background:#444"></div><div class="a" style="left:5px;top:29.4px;width:36px;height:3px;border:0.700px solid #555"></div><div class="a" style="left:4.8px;top:35.8px;width:15px;height:1px;background:#444"></div><div class="a" style="left:5px;top:37.7px;width:36px;height:3px;border:0.700px solid #555"></div><div class="a" style="left:19.8px;top:44.3px;width:6.5px;height:1.6px;border:0.7px solid #333"></div></div><div class="a" style="left:24.500px;top:57.500px;width:4.500px;height:6px;border-radius:2px;background:#2a2a2a"></div><div class="a" style="left:25.500px;top:3.500px;width:1.500px;height:1.500px;border-radius:1px;background:#222"></div></div>
<div class="t" style="left:46.6px;top:481.56px;font-size:9px;color:#444;letter-spacing:-0.052px;">register</div>
<svg class="a" style="left:94px;top:483px" width="11" height="7" viewBox="0 0 11 7"><path d="M0.800 1.200 L5.500 6 L10.200 1.200" stroke="#444" stroke-width="0.900" fill="none"/></svg>
<div class="a" style="left:10px;top:506px;width:102px;height:87.500px;background:#fff"></div>
<div class="a" style="left:35px;top:508.3px;width:52.800px;height:65.5px;border-radius:2.500px;background:#404040"><div class="a" style="left:3.200px;top:8.600px;width:45.900px;height:47.600px;background:#fff;overflow:hidden"><div class="a" style="left:0.5px;top:2.5px;width:3.5px;height:3.5px;border:0.800px solid #bbb"></div><div class="a" style="left:6px;top:15.3px;width:16px;height:0.9px;background:#888"></div><div class="a" style="left:5.5px;top:18.8px;width:37px;height:3.5px;border:0.800px solid #777"></div><div class="a" style="left:22px;top:27.6px;width:6px;height:1.5px;background:#888"></div></div><div class="a" style="left:24.500px;top:57.500px;width:4.500px;height:6px;border-radius:2px;background:#2a2a2a"></div><div class="a" style="left:25.500px;top:3.500px;width:1.500px;height:1.500px;border-radius:1px;background:#222"></div></div>
<div class="t" style="left:32.1px;top:581.56px;font-size:9px;color:#444;letter-spacing:-0.095px;">forget passw...</div>
<div class="a" style="left:10px;top:605.500px;width:102px;height:80px;background:#fff"></div>
<div class="a" style="left:35px;top:607.8px;width:52.800px;height:65.5px;border-radius:2.500px;background:#404040"><div class="a" style="left:3.200px;top:8.600px;width:45.900px;height:47.600px;background:#fff;overflow:hidden"><div class="a" style="left:0.5px;top:2.5px;width:3.5px;height:3.5px;border:0.800px solid #bbb"></div><div class="a" style="left:6px;top:15.3px;width:16px;height:0.9px;background:#999"></div><div class="a" style="left:5.5px;top:18.8px;width:37px;height:3.5px;border:0.800px solid #777"></div><div class="a" style="left:22px;top:27.6px;width:6px;height:1.5px;background:#888"></div></div><div class="a" style="left:24.500px;top:57.500px;width:4.500px;height:6px;border-radius:2px;background:#2a2a2a"></div><div class="a" style="left:25.500px;top:3.500px;width:1.500px;height:1.500px;border-radius:1px;background:#222"></div></div>
<div class="t" style="left:41px;top:680.56px;font-size:9px;color:#444;letter-spacing:-0.504px;">6 digit code</div>
<!-- CANVAS -->
<div class="a" id="canvas"></div>
<div class="a" style="left:318px;top:200.250px;width:363.100px;height:452.400px;border-radius:10px;background:#000"></div>
<div class="a" style="left:321.900px;top:203.900px;width:355.200px;height:445px;border-radius:6.500px;background:#454545"></div>
<div class="a" style="left:343.200px;top:204px;width:0.800px;height:58px;background:#5e5e5e"></div><div class="a" style="left:655.200px;top:204px;width:0.800px;height:58px;background:#6c6c6c"></div>
<div class="a" style="left:343px;top:592px;width:1px;height:57px;background:#505050"></div><div class="a" style="left:655px;top:592px;width:1px;height:57px;background:#6a6a6a"></div>
<div class="a" style="left:322px;top:586px;width:15px;height:1px;background:#525252"></div><div class="a" style="left:661px;top:586px;width:16px;height:1px;background:#5a5a5a"></div>
<div class="a" style="left:496px;top:227px;width:7px;height:7px;border-radius:4px;background:#000"></div>
<div class="a" style="left:336.800px;top:261.200px;width:324px;height:330.500px;background:#000"></div>
<div class="a" style="left:340.500px;top:264.400px;width:316.300px;height:323.700px;background:#fff"></div>
<div class="a" style="left:340.500px;top:264.400px;width:316.300px;height:11.200px;background:#d6dee1"></div>
<div class="t" style="left:343.5px;top:267.56px;font-size:6.5px;color:#555;letter-spacing:-0.379px;">iPad</div>
<svg class="a" style="left:358.500px;top:266px" width="10" height="8" viewBox="0 0 10 8"><path d="M0.800 2.800 Q5 -0.800 9.200 2.800" stroke="#222" stroke-width="1.200" fill="none"/><path d="M2.400 4.600 Q5 2.400 7.600 4.600" stroke="#222" stroke-width="1.200" fill="none"/><path d="M3.900 6.300 Q5 5.300 6.100 6.300 L5 7.500 Z" fill="#222"/></svg>
<div class="t" style="left:486.5px;top:267.56px;font-size:6.5px;color:#444;letter-spacing:0.326px;">6:32 PM</div>
<svg class="a" style="left:642.500px;top:267px" width="11" height="6" viewBox="0 0 11 6"><rect x="0.400" y="0.400" width="8.800" height="5.200" rx="0.800" stroke="#222" stroke-width="0.800" fill="none"/><rect x="1.300" y="1.300" width="5" height="3.400" fill="#222"/><rect x="9.600" y="1.800" width="1" height="2.400" fill="#222"/></svg>
<svg class="a" style="left:342px;top:286px" width="31" height="28" viewBox="0 0 31 28"><rect x="1.200" y="1.200" width="28.200" height="25" fill="#fff" stroke="#111" stroke-width="1.500"/><path d="M2.500 2.500 L28 25 M28 2.500 L2.500 25" stroke="#6c6c6c" stroke-width="1.600"/></svg>
<div class="t" style="left:378.5px;top:300.55px;font-size:13.3px;color:#151515;letter-spacing:-0.184px;font-weight:bold;">Email:</div>
<div class="t" style="left:378px;top:371.35px;font-size:13.3px;color:#151515;letter-spacing:0.026px;font-weight:bold;">username:</div>
<div class="t" style="left:378px;top:441.85px;font-size:13.3px;color:#151515;letter-spacing:-0.333px;font-weight:bold;">password:</div>
<div class="t" style="left:378px;top:499.95px;font-size:13.3px;color:#151515;letter-spacing:-0.115px;font-weight:bold;">confirm password:</div>
<div class="a" style="left:377.500px;top:324.5px;width:256px;height:30.300px;border:1.700px solid #111;border-radius:1px;background:#fff"></div>
<div class="a" style="left:377.500px;top:400.5px;width:256px;height:30.300px;border:1.700px solid #111;border-radius:1px;background:#fff"></div>
<div class="a" style="left:377.500px;top:460.3px;width:256px;height:30.300px;border:1.700px solid #111;border-radius:1px;background:#fff"></div>
<div class="a" style="left:377.500px;top:518.3px;width:256px;height:30.300px;border:1.700px solid #111;border-radius:1px;background:#fff"></div>
<div class="a" style="left:481px;top:563.800px;width:47.500px;height:17.500px;background:#111;border-radius:1.500px"></div>
<div class="a" style="left:482.400px;top:565.200px;width:43.300px;height:13.300px;background:#fff;border-radius:1px"></div>
<div class="t" style="left:488px;top:565.72px;font-size:10.5px;color:#444;letter-spacing:-0.439px;">register</div>
<svg class="a" style="left:479px;top:602px" width="42" height="42" viewBox="0 0 42 42"><circle cx="20.700" cy="20.400" r="16.600" stroke="#000" stroke-width="3.800" fill="none"/><rect x="14.300" y="14.300" width="12.600" height="12.600" rx="3.200" stroke="#000" stroke-width="3" fill="#505050"/></svg>
<div class="a" style="left:1053px;top:198px;width:14px;height:472px;background:#f2f2f2"></div>
<div class="a" style="left:1054px;top:214.500px;width:12px;height:278px;background:#c1c1c1"></div>
<div class="a" style="left:1056.500px;top:204.500px;width:0;height:0;border:3.500px solid transparent;border-bottom:4px solid #a3a3a3;border-top:0"></div>
<div class="a" style="left:1056.500px;top:657.500px;width:0;height:0;border:3.500px solid transparent;border-top:4px solid #505050;border-bottom:0"></div>
<div class="a" style="left:137px;top:669px;width:916px;height:15px;background:#f2f2f2"></div>
<div class="a" style="left:152.300px;top:670.300px;width:868.500px;height:12px;background:#c1c1c1"></div>
<div class="a" style="left:142px;top:673px;width:0;height:0;border:3.500px solid transparent;border-right:4px solid #a3a3a3;border-left:0"></div>
<div class="a" style="left:1042.500px;top:673px;width:0;height:0;border:3.500px solid transparent;border-left:4px solid #505050;border-right:0"></div>
<div class="a" style="left:1053px;top:669px;width:15px;height:15px;background:#e3e3e3"></div>
<!-- RIGHT PANEL -->
<div class="a" id="rightp"></div>
<div class="a" style="left:1067.700px;top:198px;width:1.200px;height:486px;background:#d6d6d6"></div>
<div class="a" style="left:1069px;top:198px;width:211px;height:25.700px;background:#c9cbcc"></div>
<div class="t" style="left:1080.8px;top:205.59px;font-size:10.2px;color:#444;letter-spacing:0.027px;">register</div>
<div class="t" style="left:1080.8px;top:232.30px;font-size:10px;color:#3a3a3a;letter-spacing:0.115px;">Notes</div>
<div class="t" style="left:1080.8px;top:259.26px;font-size:9px;color:#444;letter-spacing:-0.354px;font-style:italic;">Click here to edit notes.</div>
<div class="a" style="left:1080px;top:540.400px;width:189px;height:1.600px;background:#d4d4d4"></div>
<div class="t" style="left:1080.8px;top:552.39px;font-size:10.2px;color:#4a4a4a;letter-spacing:0.056px;">Alternate Versions</div>
<div class="t" style="left:1262.5px;top:553.16px;font-size:9px;color:#444;letter-spacing:0.234px;">+</div>
<div class="t" style="left:1080.8px;top:570.57px;font-size:8.8px;color:#5a5a5a;letter-spacing:0.019px;">Click '+' to create an alternate version of this</div>
<div class="t" style="left:1080.8px;top:582.07px;font-size:8.8px;color:#5a5a5a;letter-spacing:0.119px;">wireframe</div>
<!-- TASKBAR -->
<div class="a" id="taskbar"></div>
<div class="a" style="left:0;top:683.500px;width:1280px;height:1px;background:#f0f0f0"></div>
<svg class="a" style="left:14.800px;top:695.300px" width="15.500" height="15.800" viewBox="0 0 17 17" preserveAspectRatio="none"><path d="M0.300 2.600 L6.800 1.700 V7.900 H0.300 Z M7.700 1.600 L16.300 0.300 V7.900 H7.700 Z M0.300 8.900 H6.800 V15.200 L0.300 14.300 Z M7.700 8.900 H16.300 V16.600 L7.700 15.300 Z" fill="#fff"/></svg>
<div class="a" style="left:45px;top:684.500px;width:324px;height:37.500px;background:#333333"></div>
<div class="t" style="left:52.5px;top:696.78px;font-size:14.5px;color:#939393;letter-spacing:-0.428px;">Search Windows</div>
<svg class="a" style="left:384px;top:695px" width="21" height="16" viewBox="0 0 21 16"><rect x="0.500" y="0.800" width="19.500" height="14" rx="0.800" fill="#8ccdf3"/><rect x="0.500" y="12.800" width="19.500" height="2" fill="#5ab2ea"/><circle cx="6.500" cy="6.500" r="3.800" fill="#2a7ed0"/><path d="M6.500 6.500 V2.700 A3.800 3.800 0 0 1 10.300 6.500 Z" fill="#d5ecfb"/><rect x="12.300" y="2.500" width="5.500" height="1.500" fill="#2a7ed0"/><rect x="12.300" y="5.300" width="5.500" height="1.500" fill="#2a7ed0"/><rect x="12.300" y="8.100" width="5.500" height="1.500" fill="#2a7ed0"/><rect x="13.500" y="2.300" width="1.500" height="8" fill="#e8f5fd" opacity="0.600"/></svg>
<svg class="a" style="left:432px;top:692px" width="17" height="23" viewBox="0 0 17 23"><rect x="0" y="0" width="17" height="23" fill="#fff"/><rect x="2" y="2.300" width="13" height="3.200" fill="#111"/><path d="M2.5 8.5 h3 l-1.500 2.600 h-1.500 Z" fill="#111"/><path d="M7.1 8.5 h3 l-1.500 2.600 h-1.500 Z" fill="#111"/><path d="M11.7 8.5 h3 l-1.500 2.600 h-1.500 Z" fill="#111"/><path d="M2.5 13.2 h3 l-1.500 2.600 h-1.500 Z" fill="#111"/><path d="M7.1 13.2 h3 l-1.500 2.600 h-1.500 Z" fill="#111"/><path d="M11.7 13.2 h3 l-1.500 2.600 h-1.500 Z" fill="#111"/><path d="M2.5 17.9 h3 l-1.500 2.600 h-1.500 Z" fill="#111"/><path d="M7.1 17.9 h3 l-1.500 2.600 h-1.500 Z" fill="#111"/><path d="M11.7 17.9 h3 l-1.500 2.600 h-1.500 Z" fill="#111"/></svg>
<svg class="a" style="left:476px;top:694px" width="21" height="18" viewBox="0 0 21 18"><path d="M0.300 1.600 a1 1 0 0 1 1 -1 H7 L9 2.600 H19.700 a1 1 0 0 1 1 1 V16.800 H0.300 Z" fill="#e9b95a"/><rect x="0.300" y="3.500" width="20.400" height="13.500" rx="0.800" fill="#f9db7d"/><path d="M3.500 17.300 V11.500 a1 1 0 0 1 1 -1 H16.500 a1 1 0 0 1 1 1 V17.300 H13.300 V14.200 H7.700 V17.300 Z" fill="#3a9fe3"/></svg>
<div class="a" style="left:468px;top:720px;width:37.500px;height:2px;background:#76b9ed"></div>
<div class="a" style="left:510px;top:684.500px;width:45px;height:37.500px;background:#3c3c3c"></div>
<div class="a" style="left:510px;top:720px;width:45px;height:2px;background:#76b9ed"></div>
<svg class="a" style="left:520px;top:690px" width="28" height="28" viewBox="0 0 28 28"><circle cx="12.600" cy="12.600" r="10.400" fill="#fff"/><path d="M12.600 12.600 L3.600 7.400 A10.400 10.400 0 0 1 21.600 7.400 Z" fill="#e33b2e"/><path d="M12.600 12.600 L21.600 7.400 A10.400 10.400 0 0 1 12.600 23 Z" fill="#f7b72b"/><path d="M12.600 12.600 L12.600 23 A10.400 10.400 0 0 1 3.600 7.400 Z" fill="#2e9b4b"/><circle cx="12.600" cy="12.600" r="4.800" fill="#f1f1f1"/><circle cx="12.600" cy="12.600" r="3.800" fill="#4a7fe0"/><circle cx="18.500" cy="18.800" r="7" fill="#d8d2bc"/><circle cx="18.500" cy="18.800" r="5.300" fill="#eef0ee"/><circle cx="18.500" cy="18.800" r="3.900" fill="#2c4f8c"/><path d="M16.300 20.600 L17.400 16.800 H18.600 L17.900 19.600 H20.200 L19.900 20.600 Z" fill="#e9eef6"/></svg>
<svg class="a" style="left:566px;top:690px" width="26" height="26" viewBox="0 0 26 26"><defs><linearGradient id="ffg" x1="0.700" y1="0" x2="0.300" y2="1"><stop offset="0" stop-color="#55c8fa"/><stop offset="0.450" stop-color="#2b95ee"/><stop offset="1" stop-color="#1b56d6"/></linearGradient></defs><path d="M16.500 1.500 C18 3.500 20 5 21.500 7.500 C24 11 24 16 21.500 19.500 C18.500 24 12 25 7.500 22.500 C2.500 20 0.800 14 3 9 C3.500 7.500 4.500 6 5.800 5 C5.500 6.500 6 7.500 7 8.200 C8.500 6 11 5.500 13 6 C14 4.500 15.500 3.500 16.500 1.500 Z" fill="url(#ffg)"/><ellipse cx="12" cy="14" rx="4.200" ry="3.800" fill="#2a2a9a"/><path d="M7.500 12.500 C8.500 10.500 11 9.800 13 10.300 C15.500 10.800 17 12.500 17 14.500 C15.500 12.500 13.500 12 12 12.500 C10.500 13 9.500 13 7.500 12.500 Z" fill="#3f7ff0"/></svg>
<svg class="a" style="left:613.5px;top:691.7px" width="23.0" height="23.0" viewBox="-11.500 -11.500 23 23"><circle cx="0" cy="0" r="10.500" fill="#1ed760"/><path d="M-6.200 -3.200 Q0 -5.500 6.500 -2.200" stroke="#0e1a10" stroke-width="2.100" fill="none" stroke-linecap="round"/><path d="M-5.500 0.500 Q0 -1.500 5.500 1.300" stroke="#0e1a10" stroke-width="1.800" fill="none" stroke-linecap="round"/><path d="M-4.800 3.800 Q0 2.200 4.500 4.500" stroke="#0e1a10" stroke-width="1.500" fill="none" stroke-linecap="round"/></svg>
<div class="a" style="left:606.300px;top:720px;width:37.500px;height:2px;background:#76b9ed"></div>
<svg class="a" style="left:1020.0px;top:694.5px" width="17.4" height="17.4" viewBox="-11.500 -11.500 23 23"><circle cx="0" cy="0" r="10.500" fill="#1ed760"/><path d="M-6.200 -3.200 Q0 -5.500 6.500 -2.200" stroke="#0e1a10" stroke-width="2.100" fill="none" stroke-linecap="round"/><path d="M-5.500 0.500 Q0 -1.500 5.500 1.300" stroke="#0e1a10" stroke-width="1.800" fill="none" stroke-linecap="round"/><path d="M-4.800 3.800 Q0 2.200 4.500 4.500" stroke="#0e1a10" stroke-width="1.500" fill="none" stroke-linecap="round"/></svg>
<svg class="a" style="left:1042.500px;top:697px" width="18" height="13" viewBox="0 0 18 13"><ellipse cx="9" cy="6.300" rx="8.200" ry="5.700" fill="#6e3208"/><ellipse cx="9" cy="4.800" rx="7.600" ry="3.900" fill="#c97a1e"/><ellipse cx="10.500" cy="3.300" rx="4.500" ry="1.600" fill="#e9b13c"/><path d="M1.500 7.500 Q9 11 16.500 7 Q15 11.800 9 12 Q3 11.800 1.500 7.500 Z" fill="#9c4510"/></svg>
<svg class="a" style="left:1066px;top:697px" width="16" height="13" viewBox="0 0 16 13"><g fill="#c4182a"><circle cx="3.500" cy="8.500" r="2.700"/><circle cx="8" cy="5" r="2.900"/><circle cx="12.500" cy="8" r="2.600"/><circle cx="8" cy="10.500" r="1.700"/><circle cx="12" cy="2.500" r="1.500"/><circle cx="4.500" cy="3.500" r="1.200"/></g><g fill="#e86a76"><circle cx="7.300" cy="4.300" r="0.900"/><circle cx="3" cy="8" r="0.800"/><circle cx="12" cy="7.400" r="0.800"/></g></svg>
<svg class="a" style="left:1089.500px;top:694.500px" width="16" height="18" viewBox="0 0 16 18"><path d="M7 0.500 C9 1.800 11.500 2.200 13.500 2.200 C13.500 9 12.500 13.500 7 16.800 C1.500 13.500 0.500 9 0.500 2.200 C2.500 2.200 5 1.800 7 0.500 Z" fill="#fff"/><path d="M7 0.500 V16.800 M0.600 8 H13.400" stroke="#3a2020" stroke-width="1.300"/><rect x="7.800" y="9.500" width="7.500" height="7.500" rx="1" fill="#e23a3a"/><path d="M9.500 11.200 L13.600 15.300 M13.600 11.200 L9.500 15.300" stroke="#fff" stroke-width="1.400"/></svg>
<svg class="a" style="left:1110.500px;top:696.500px" width="17" height="12" viewBox="0 0 17 12"><rect x="3.600" y="2.600" width="11.600" height="8.200" rx="0.800" stroke="#f2f2f2" stroke-width="1.200" fill="none"/><rect x="15.400" y="5" width="1.200" height="3.500" fill="#f2f2f2"/><rect x="1" y="1" width="4.500" height="4" rx="0.800" fill="#0f1011" stroke="#f2f2f2" stroke-width="1.100"/><path d="M2.200 0 V1.500 M4.300 0 V1.500 M3.300 5 V8.500" stroke="#f2f2f2" stroke-width="1"/></svg>
<svg class="a" style="left:1136.500px;top:697px" width="13" height="14" viewBox="0 0 13 14"><g stroke="#e6e6e6" stroke-width="1.500" fill="none"><path d="M1 12.500 A11 11 0 0 1 11.500 1.300"/><path d="M4 12.500 A8 8 0 0 1 11.700 4.700"/><path d="M7 12.500 A5 5 0 0 1 11.800 8"/></g><circle cx="10.500" cy="11.500" r="1.500" fill="#fff"/></svg>
<svg class="a" style="left:1156px;top:696px" width="17" height="15" viewBox="0 0 17 15"><path d="M0.700 5 H3.500 L7 1.500 V13.500 L3.500 10 H0.700 Z" stroke="#f2f2f2" stroke-width="1.100" fill="none" stroke-linejoin="round"/><path d="M9 5.300 Q10.500 7.500 9 9.700" stroke="#f2f2f2" stroke-width="1.100" fill="none"/><path d="M11.300 3.300 Q14 7.500 11.300 11.700" stroke="#f2f2f2" stroke-width="1.100" fill="none"/><path d="M13.600 1.200 Q17.500 7.500 13.600 13.800" stroke="#f2f2f2" stroke-width="1.100" fill="none"/></svg>
<div class="t" style="left:1181.6px;top:697.36px;font-size:11.5px;color:#f2f2f2;letter-spacing:-1.174px;">ENG</div>
<div class="t" style="left:1230.6px;top:688.78px;font-size:12px;color:#f2f2f2;letter-spacing:-1.266px;">18:33</div>
<div class="t" style="left:1215.6px;top:706.28px;font-size:12px;color:#f2f2f2;letter-spacing:-0.606px;">25/05/2022</div>
<div class="a" style="left:1275px;top:684.500px;width:1px;height:37.500px;background:#4a4a4a"></div>
</body>
</html>
